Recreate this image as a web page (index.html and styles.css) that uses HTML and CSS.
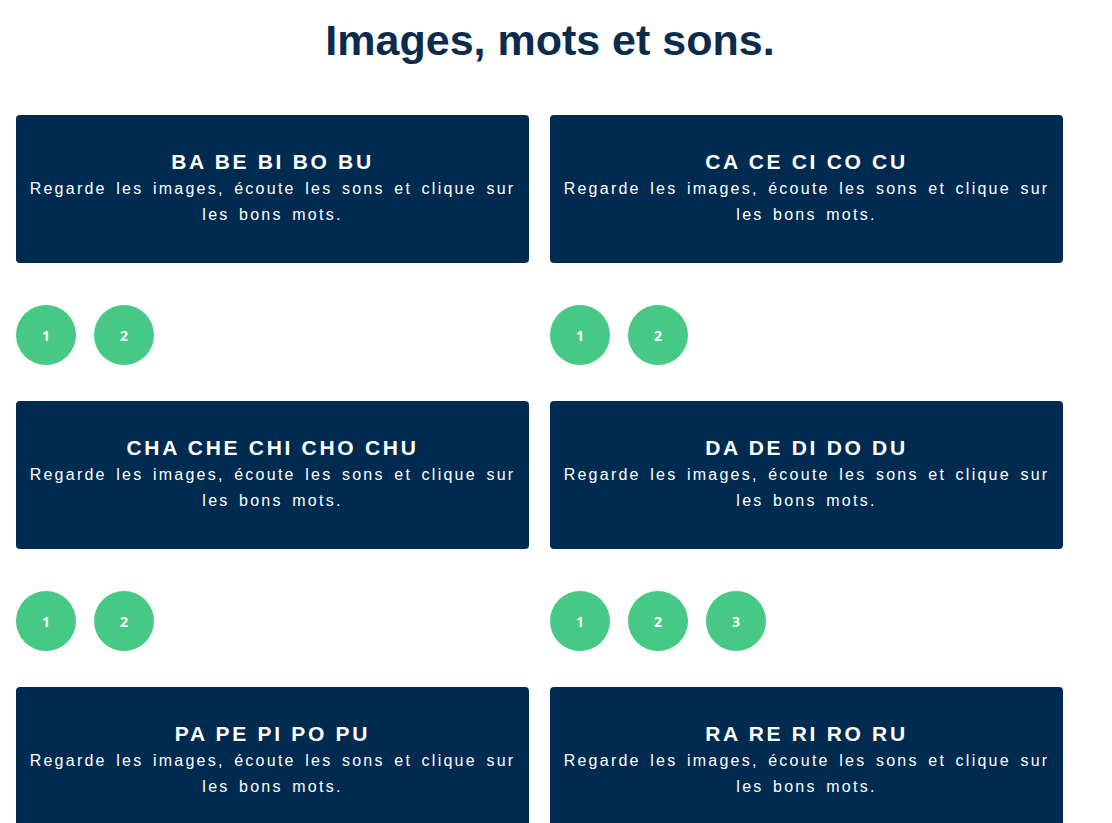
FILE: index.html
```html
<!DOCTYPE html>
<html lang="fr">
<head>
<meta charset="utf-8">
<title>Images, mots et sons.</title>
<link rel="stylesheet" href="styles.css">
</head>
<body>
<h1 class="page-title">Images, mots et sons.</h1>
<div class="grid">
  <div class="cell">
    <div class="card"><h2 class="card-title">BA BE BI BO BU</h2><p class="card-text">Regarde les images, écoute les sons et clique sur les bons mots.</p></div>
    <div class="dots"><span class="dot">1</span><span class="dot">2</span></div>
  </div>
  <div class="cell">
    <div class="card"><h2 class="card-title">CA CE CI CO CU</h2><p class="card-text">Regarde les images, écoute les sons et clique sur les bons mots.</p></div>
    <div class="dots"><span class="dot">1</span><span class="dot">2</span></div>
  </div>
  <div class="cell">
    <div class="card"><h2 class="card-title">CHA CHE CHI CHO CHU</h2><p class="card-text">Regarde les images, écoute les sons et clique sur les bons mots.</p></div>
    <div class="dots"><span class="dot">1</span><span class="dot">2</span></div>
  </div>
  <div class="cell">
    <div class="card"><h2 class="card-title">DA DE DI DO DU</h2><p class="card-text">Regarde les images, écoute les sons et clique sur les bons mots.</p></div>
    <div class="dots"><span class="dot">1</span><span class="dot">2</span><span class="dot">3</span></div>
  </div>
  <div class="cell">
    <div class="card"><h2 class="card-title">PA PE PI PO PU</h2><p class="card-text">Regarde les images, écoute les sons et clique sur les bons mots.</p></div>
    <div class="dots"><span class="dot">1</span><span class="dot">2</span></div>
  </div>
  <div class="cell">
    <div class="card"><h2 class="card-title">RA RE RI RO RU</h2><p class="card-text">Regarde les images, écoute les sons et clique sur les bons mots.</p></div>
    <div class="dots"><span class="dot">1</span><span class="dot">2</span></div>
  </div>
</div>
</body>
</html>
```

FILE: styles.css
```css
html, body {
  margin: 0;
  padding: 0;
  background: #ffffff;
  font-family: "Liberation Sans", Arial, sans-serif;
}
.page-title {
  margin: 0;
  padding: 14px 12px 0 0;
  height: 115px;
  box-sizing: border-box;
  text-align: center;
  font-size: 43px;
  line-height: 52px;
  font-weight: 700;
  color: #0b2c4c;
}
.grid {
  display: grid;
  grid-template-columns: 513px 513px;
  column-gap: 21px;
  padding-left: 16px;
}
.cell {
  display: flex;
  flex-direction: column;
}
.card {
  height: 148px;
  box-sizing: border-box;
  background: #002b50;
  border-radius: 4px;
  display: flex;
  flex-direction: column;
  justify-content: center;
  align-items: center;
  color: #ffffff;
  text-align: center;
  padding: 0 11px;
}
.card-title {
  margin: 0;
  font-size: 21px;
  line-height: 24px;
  font-weight: 700;
  letter-spacing: 2.7px;
}
.card-text {
  margin: 2px 0 0;
  font-size: 16px;
  line-height: 26px;
  letter-spacing: 2.25px;
  word-spacing: 2.8px;
}
.dots {
  display: flex;
  gap: 18px;
  margin-top: 42px;
  margin-bottom: 36px;
}
.dot {
  width: 60px;
  height: 60px;
  border-radius: 50%;
  background: #45c985;
  color: #ffffff;
  display: flex;
  align-items: center;
  justify-content: center;
  font-family: "Open Sans", sans-serif;
  font-weight: 700;
  font-size: 14px;
}
```
